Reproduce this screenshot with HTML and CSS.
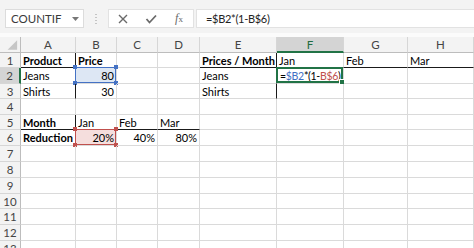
FILE: index.html
```html
<!DOCTYPE html>
<html>
<head>
<meta charset="utf-8">
<link rel="stylesheet" href="styles.css">
</head>
<body>
<div class="app">
  <div class="toolbar">
    <div class="namebox">
      <span class="nb-text">COUNTIF</span>
      <svg class="nb-arrow" width="7" height="4" viewBox="0 0 7 4"><polygon points="0,0 7,0 3.5,4" fill="#777"/></svg>
    </div>
    <div class="grip"></div>
    <div class="fxbtns">
      <span class="btn"><svg width="10" height="10" viewBox="0 0 10 10"><path d="M1 1 L9 9 M9 1 L1 9" stroke="#6a6a6a" stroke-width="1.4" fill="none"/></svg></span>
      <span class="btn"><svg width="12" height="10" viewBox="0 0 12 10"><path d="M1.5 5 L4.5 8.5 L11 1.5" stroke="#6a6a6a" stroke-width="1.8" fill="none"/></svg></span>
      <span class="btn fx"><i>f</i><sub>x</sub></span>
    </div>
    <div class="formula">=$B2*(1-B$6)</div>
  </div>

  <div class="sheet">
    <!-- header row -->
    <div class="corner"><svg width="21" height="16" viewBox="0 0 21 16"><polygon points="18,3 18,13 8,13" fill="#c6c6c6"/></svg></div>
    <div class="ch">A</div><div class="ch">B</div><div class="ch">C</div><div class="ch">D</div>
    <div class="ch">E</div><div class="ch sel">F</div><div class="ch">G</div><div class="ch">H</div>

    <!-- row 1 -->
    <div class="rh">1</div>
    <div class="c b bb br">Product</div><div class="c b bb">Price</div><div class="c"></div><div class="c"></div>
    <div class="c b bb br">Prices / Month</div><div class="c bb">Jan</div><div class="c bb">Feb</div><div class="c bb">Mar</div>

    <!-- row 2 -->
    <div class="rh sel">2</div>
    <div class="c br">Jeans</div>
    <div class="c num fill-blue">80<div class="selbox blue"><i class="h tl"></i><i class="h tr"></i><i class="h bl"></i><i class="h br2"></i></div></div>
    <div class="c"></div><div class="c"></div>
    <div class="c br">Jeans</div>
    <div class="c active"><span class="t-black">=</span><span class="t-blue">$B2</span><span class="t-black">*(1-</span><span class="t-red">B$6</span><span class="t-black">)</span><div class="actbox"><i class="fillh"></i></div></div>
    <div class="c"></div><div class="c"></div>

    <!-- row 3 -->
    <div class="rh">3</div>
    <div class="c br">Shirts</div><div class="c num">30</div><div class="c"></div><div class="c"></div>
    <div class="c br">Shirts</div><div class="c"></div><div class="c"></div><div class="c"></div>

    <!-- row 4 -->
    <div class="rh">4</div>
    <div class="c"></div><div class="c"></div><div class="c"></div><div class="c"></div>
    <div class="c"></div><div class="c"></div><div class="c"></div><div class="c"></div>

    <!-- row 5 -->
    <div class="rh">5</div>
    <div class="c b bb br">Month</div><div class="c bb">Jan</div><div class="c bb">Feb</div><div class="c bb">Mar</div>
    <div class="c"></div><div class="c"></div><div class="c"></div><div class="c"></div>

    <!-- row 6 -->
    <div class="rh">6</div>
    <div class="c b br">Reduction</div>
    <div class="c num fill-red">20%<div class="selbox red"><i class="h tl"></i><i class="h tr"></i><i class="h bl"></i><i class="h br2"></i></div></div>
    <div class="c num">40%</div><div class="c num">80%</div>
    <div class="c"></div><div class="c"></div><div class="c"></div><div class="c"></div>

    <!-- rows 7-13 -->
    <div class="rh">7</div>
    <div class="c"></div><div class="c"></div><div class="c"></div><div class="c"></div><div class="c"></div><div class="c"></div><div class="c"></div><div class="c"></div>
    <div class="rh">8</div>
    <div class="c"></div><div class="c"></div><div class="c"></div><div class="c"></div><div class="c"></div><div class="c"></div><div class="c"></div><div class="c"></div>
    <div class="rh">9</div>
    <div class="c"></div><div class="c"></div><div class="c"></div><div class="c"></div><div class="c"></div><div class="c"></div><div class="c"></div><div class="c"></div>
    <div class="rh">10</div>
    <div class="c"></div><div class="c"></div><div class="c"></div><div class="c"></div><div class="c"></div><div class="c"></div><div class="c"></div><div class="c"></div>
    <div class="rh">11</div>
    <div class="c"></div><div class="c"></div><div class="c"></div><div class="c"></div><div class="c"></div><div class="c"></div><div class="c"></div><div class="c"></div>
    <div class="rh">12</div>
    <div class="c"></div><div class="c"></div><div class="c"></div><div class="c"></div><div class="c"></div><div class="c"></div><div class="c"></div><div class="c"></div>
    <div class="rh">13</div>
    <div class="c"></div><div class="c"></div><div class="c"></div><div class="c"></div><div class="c"></div><div class="c"></div><div class="c"></div><div class="c"></div>
  </div>
</div>
</body>
</html>
```

FILE: styles.css
```css
html, body {
  margin: 0;
  padding: 0;
  width: 474px;
  height: 248px;
  overflow: hidden;
  background: #fff;
}

.app {
  font-family: Lato, "Liberation Sans", sans-serif;
  font-size: 11px;
  color: #000;
}

/* ---------- formula bar area ---------- */
.toolbar {
  display: flex;
  align-items: flex-start;
  height: 37px;
  box-sizing: border-box;
  padding: 9px 0 0 5px;
  background: linear-gradient(#f3f3f3 0, #f3f3f3 33px, #fbfbfb 33px);
}

.namebox {
  width: 79px;
  height: 19px;
  box-sizing: border-box;
  background: #fff;
  border: 1px solid #dcdcdc;
  display: flex;
  align-items: center;
  padding: 0 4px 0 5px;
  color: #3a3a3a;
  font-size: 11.5px;
}

.nb-arrow {
  margin-left: auto;
}

.grip {
  width: 2px;
  height: 11px;
  margin: 4px 11px 0 11px;
  background: radial-gradient(circle, #c4c4c4 0.8px, transparent 1px) 0 0 / 2px 3px repeat-y;
}

.fxbtns {
  width: 86px;
  height: 19px;
  box-sizing: border-box;
  background: #fff;
  border: 1px solid #e2e2e2;
  display: flex;
  align-items: center;
}

.btn {
  width: 28px;
  display: flex;
  justify-content: center;
  align-items: center;
}

.fx {
  font-family: "Liberation Serif", serif;
  color: #6a6a6a;
  font-size: 12px;
}

.fx sub {
  font-size: 9px;
  vertical-align: -2px;
}

.formula {
  flex: 1;
  height: 19px;
  box-sizing: border-box;
  margin-left: 2px;
  background: #fff;
  border: 1px solid #e2e2e2;
  border-right: none;
  padding-left: 9px;
  display: flex;
  align-items: center;
  font-size: 11px;
  letter-spacing: -0.3px;
  color: #222;
}

/* ---------- sheet grid ---------- */
.sheet {
  display: grid;
  grid-template-columns: 21px 55px 41px 41px 42px 77px 67px 64px 1fr;
  grid-template-rows: 16px 15px 16px 15px 16px 15px 16px 16px 16px 16px 15px 16px 16px 16px;
}

.corner,
.ch,
.rh,
.c {
  box-sizing: border-box;
  display: flex;
  align-items: center;
  white-space: nowrap;
  position: relative;
}

.corner {
  background: #f3f3f3;
  border-right: 1px solid #bdbdbd;
  border-bottom: 1px solid #bdbdbd;
}

.ch {
  background: #f3f3f3;
  justify-content: center;
  border-right: 1px solid #d6d6d6;
  border-bottom: 1px solid #bdbdbd;
  color: #444;
  font-size: 11.5px;
}

.ch.sel {
  background: #d4d4d4;
  border-bottom: 2px solid #217346;
  color: #1f6b40;
}

.rh {
  background: #f3f3f3;
  justify-content: center;
  border-right: 1px solid #bdbdbd;
  border-bottom: 1px solid #d6d6d6;
  color: #444;
  font-size: 11.5px;
}

.rh.sel {
  background: #d4d4d4;
  border-right: 2px solid #217346;
}

.c {
  border-right: 1px solid #dadada;
  border-bottom: 1px solid #dadada;
  padding: 0 2px;
}

.c.b { font-weight: 700; }
.c.num { justify-content: flex-end; }
.c.bb { border-bottom-color: #1a1a1a; }
.c.br { border-right-color: #1a1a1a; }

.fill-blue { background: #dde7f4; }
.fill-red { background: #f5dedd; }

.selbox {
  position: absolute;
  top: -1px;
  left: -1px;
  right: 0;
  bottom: 0;
  border: 1px solid;
}

.selbox.blue { border-color: #4472c4; }
.selbox.red { border-color: #c0504d; }

.h {
  position: absolute;
  width: 4px;
  height: 4px;
}

.blue .h { background: #4472c4; }
.red .h { background: #c0504d; }

.h.tl { top: -3px; left: -3px; }
.h.tr { top: -3px; right: -3px; }
.h.bl { bottom: -3px; left: -3px; }
.h.br2 { bottom: -3px; right: -3px; }

.active {
  padding-left: 3px;
  font-size: 10.5px;
  letter-spacing: -0.3px;
}

.actbox {
  position: absolute;
  top: -1px;
  left: -1px;
  right: 0;
  bottom: 0;
  border: 2px solid #217346;
}

.fillh {
  position: absolute;
  width: 4px;
  height: 4px;
  right: -4px;
  bottom: -4px;
  background: #217346;
  border: 1px solid #fff;
}

.t-black { color: #000; }
.t-blue { color: #3f6fc4; }
.t-red { color: #c0504d; }
```
